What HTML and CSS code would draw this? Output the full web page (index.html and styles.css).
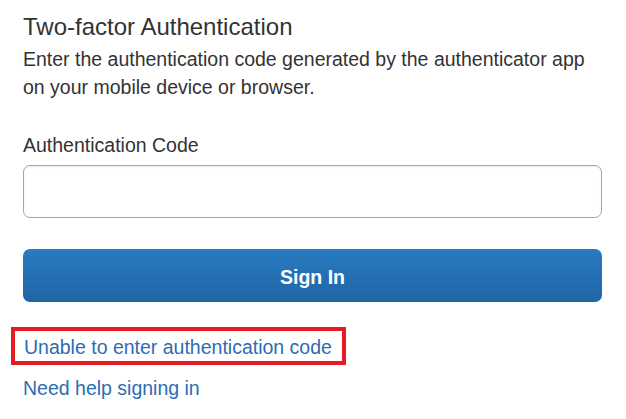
FILE: index.html
```html
<!DOCTYPE html>
<html lang="en">
<head>
<meta charset="utf-8">
<title>Two-factor Authentication</title>
<link rel="stylesheet" href="styles.css">
</head>
<body>
<main class="panel">
  <h1 class="title">Two-factor Authentication</h1>
  <p class="intro">Enter the authentication code generated by the authenticator app on your mobile device or browser.</p>
  <form class="form">
    <label class="label" for="code">Authentication Code</label>
    <input class="input" id="code" type="text">
    <button class="btn" type="button">Sign In</button>
  </form>
  <div class="links">
    <div class="highlight"><a class="link" href="#">Unable to enter authentication code</a></div>
    <a class="link link-help" href="#">Need help signing in</a>
  </div>
</main>
</body>
</html>
```

FILE: styles.css
```css
html, body {
  margin: 0;
  padding: 0;
  background: #fff;
}
body {
  font-family: "Liberation Sans", Arial, sans-serif;
  color: #333;
}
.panel {
  width: 579px;
  padding: 13px 0 0 23px;
}
.title {
  margin: 0;
  font-size: 24px;
  line-height: 28px;
  font-weight: normal;
  color: #333;
}
.intro {
  margin: 4px 0 0;
  font-size: 19.5px;
  line-height: 28px;
}
.form {
  display: flex;
  flex-direction: column;
  margin-top: 30px;
}
.label {
  font-size: 19.5px;
  line-height: 28px;
}
.input {
  box-sizing: border-box;
  margin: 6px 0 0;
  height: 53px;
  width: 579px;
  border: 1px solid #a6a6a6;
  border-radius: 7px;
  box-shadow: inset 0 1px 2px rgba(0,0,0,0.08);
  font: inherit;
  font-size: 19.5px;
  padding: 0 12px;
}
.btn {
  margin-top: 31px;
  height: 53px;
  width: 579px;
  border: 0;
  border-radius: 7px;
  background: linear-gradient(#2a7bc3, #1f65a4);
  color: #fff;
  font-family: "Liberation Sans", Arial, sans-serif;
  font-weight: bold;
  font-size: 19.5px;
  padding: 3px 0 0;
}
.links {
  display: flex;
  flex-direction: column;
  align-items: flex-start;
  margin-top: 25px;
}
.highlight {
  margin-left: -12px;
  border: 4px solid #e41c24;
  padding: 2px 10px 0 9px;
}
.link {
  font-size: 19.5px;
  line-height: 28px;
  color: #2c6db4;
  text-decoration: none;
  display: block;
}
.link-help {
  margin-top: 9px;
}
```
